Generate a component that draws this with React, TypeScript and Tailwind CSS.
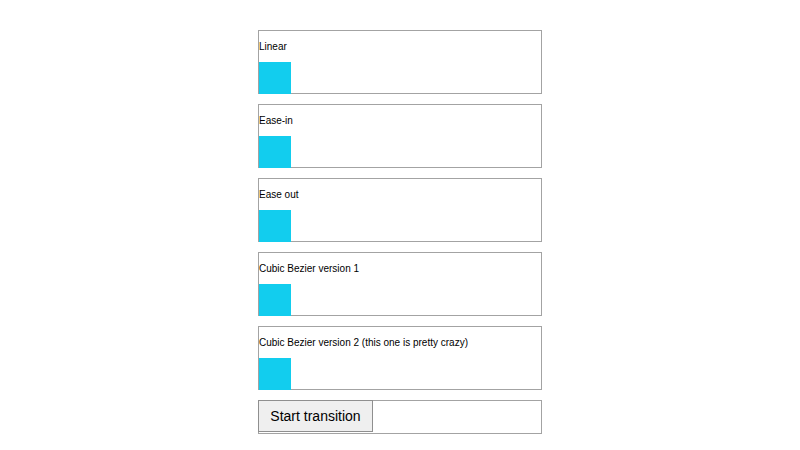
const ROWS = [
  'Linear',
  'Ease-in',
  'Ease out',
  'Cubic Bezier version 1',
  'Cubic Bezier version 2 (this one is pretty crazy)',
];

function Track({ label }: { label: string }) {
  return (
    <div className="flex h-[64px] flex-col border border-[#a3a3a3]">
      <p className="mt-[9px] text-[10px] leading-[14px] text-black">{label}</p>
      <div className="mt-auto -mb-px h-[32px] w-[32px] bg-[#12cdee]" />
    </div>
  );
}

export default function App() {
  return (
    <div className="flex min-h-[450px] w-full justify-center bg-white pt-[30px]" style={{ fontFamily: '"Liberation Sans", Arial, sans-serif' }}>
      <div className="flex w-[284px] flex-col gap-[10px]">
        {ROWS.map((r) => (
          <Track key={r} label={r} />
        ))}
        <div className="flex h-[34px] border border-[#a3a3a3]">
          <button
            type="button"
            className="h-full w-[115px] -m-px border border-[#8f8f8f] bg-[#efefef] text-[14px] text-black"
          >
            Start transition
          </button>
        </div>
      </div>
    </div>
  );
}
